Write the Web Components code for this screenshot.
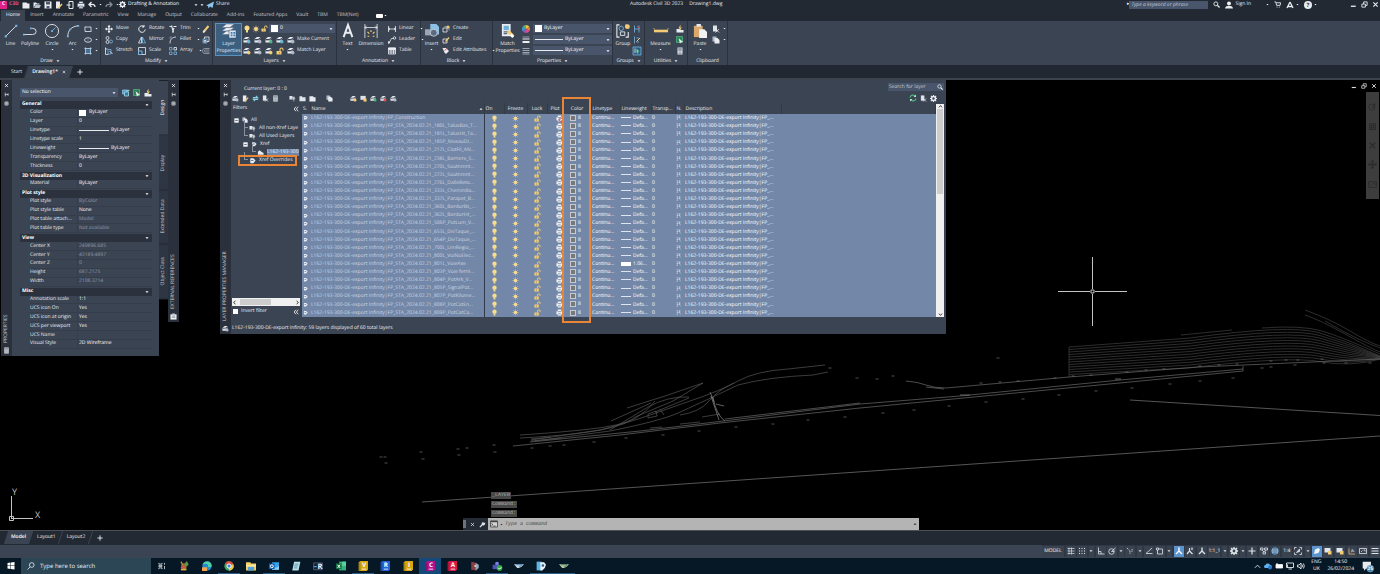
<!DOCTYPE html>
<html lang="en">
<head>
<meta charset="utf-8">
<title>Autodesk Civil 3D 2023 - Drawing1.dwg</title>
<style>
  :root {
    --dark: #222933;
    --panel: #3b4453;
    --field: #48556a;
    --line: #2b323e;
    --text: #eceef2;
    --accent: #ea8536;
  }

  html, body {
    height: 100%;
    margin: 0;
  }

  body {
    display: flex;
    flex-direction: column;
    overflow: hidden;
    color: var(--text);
    background: #000;
    font: 5px/7px "Open Sans", "Noto Sans", sans-serif;
    text-rendering: geometricPrecision;
  }

  drawing-area {
    flex: 1;
  }
</style>
</head>
<body>
<title-bar></title-bar>
<ribbon-tabs></ribbon-tabs>
<ribbon-bar></ribbon-bar>
<doc-tabs></doc-tabs>
<drawing-area>
  <properties-palette></properties-palette>
  <references-palette></references-palette>
  <layer-manager></layer-manager>
  <command-line></command-line>
</drawing-area>
<layout-tabs></layout-tabs>
<status-bar></status-bar>
<task-bar></task-bar>

<script>
'use strict';

// rules that every shadow root needs
const base = `
  :host, *, *::before, *::after { box-sizing: border-box; }
  button, input, select {
    margin: 0; padding: 0; border: 0; border-radius: 0;
    font: inherit; color: inherit; background: none; text-align: inherit;
    text-rendering: inherit; outline: none;
  }
  select { appearance: none; min-width: 0; }
  button { display: inline-flex; align-items: center; justify-content: center; white-space: nowrap; }
  a { color: inherit; text-decoration: none; }
`;

function render(element, css, html) {
  const template = document.createElement('template');
  template.innerHTML = `<style>${base}${css}</style>${html}`;
  element.attachShadow({ mode: 'open' });
  element.shadowRoot.appendChild(template.content.cloneNode(true));
}

const W = '#e8ebf0';
const Y = '#f3cb72';
const G = '#4fb57e';

// a stack of small layer sheets with a badge in the lower right corner
const sheets = (badge) => `
  <path d="M1 6 6 2h7L8 6z M1 9l5-1h6l2 1-5 4H1z" fill="${W}" stroke="none"/>
  <path d="M1 7v2h7l5-4" stroke="#9aa5b5"/><circle cx="11.5" cy="11.5" r="3.5" fill="${badge}" stroke="none"/>`;

// square product tile of the Autodesk family
const product = (letter, color) => `
  <path d="M1 2 4 0h12v13l-2 3H1z" fill="${color}" stroke="none"/><path d="M1 2l3 1v13H1z" fill="#0003" stroke="none"/>
  <text x="9.5" y="10" text-anchor="middle" font-size="10" font-weight="700" fill="#fff" stroke="none">${letter}</text>
  <path d="M6 13h7" stroke="#fff" stroke-width="1.3"/>`;

const icons = {
  caret: '<path d="M2 5h12l-6 7z" fill="currentColor" stroke="none"/>',
  close: '<path d="M3 3l10 10M13 3 3 13" stroke-width="2.4"/>',
  minimize: '<path d="M2 12h11" stroke-width="3"/>',
  restore: '<path d="M2 7h8v7H2zM6 7V2h8v8h-4" stroke-width="2"/>',
  plus: '<path d="M8 1v14M1 8h14" stroke-width="2.4"/>',
  pin: '<path d="M4 2v12M4 8h9M13 4v8" stroke-width="2"/>',
  menu: '<path d="M3 3h10v10H3z M6 6h4v4H6z" stroke-width="2"/>',
  file: `<path d="M1 3h8l2 2h4v10H1z" fill="${W}" stroke="none"/>`,
  open: `<path d="M1 14V3h5l2 2h5v2H5z" fill="${W}" stroke="none"/><path d="M5 8h11l-3 6H2z" fill="#b9c1cd" stroke="none"/>`,
  save: `<path d="M1 1h14v14H1z" fill="${W}" stroke="none"/><path d="M4 2h8v5H4zM5 10h6v5H5z" fill="#4a5567" stroke="none"/>`,
  saveas: `<path d="M2 1h8v14H2z" fill="${W}" stroke="none"/><path d="M7 14l7-8" stroke="${Y}" stroke-width="3"/>`,
  phone: '<path d="M6 1h8v14H6z" stroke-width="2"/><path d="M1 8h8" stroke-width="2"/>',
  print: `<path d="M4 1h8v4H4z M1 5h14v7H1z M4 10h8v5H4z" fill="${W}" stroke="#4a5567" stroke-width="1"/>`,
  undo: '<path d="M14 12c0-5-4-6-11-5M7 2 2 7l5 5" stroke-width="2.5"/>',
  redo: '<path d="M2 12c0-5 4-6 11-5M9 2l5 5-5 5" stroke-width="2.5"/>',
  gear: '<circle cx="8" cy="8" r="4.5" stroke-width="3.4"/><path d="M8 0v3M8 13v3M0 8h3M13 8h3M2 2l2 2M12 12l2 2M14 2l-2 2M4 12l-2 2" stroke-width="2.6"/>',
  send: '<path d="M0 9 16 1l-3 13-5-3-3 4-1-5z" fill="#8cc6ef" stroke="none"/>',
  search: '<circle cx="6.5" cy="6.5" r="4.5" stroke-width="2"/><path d="M10 10l5 5" stroke-width="3"/>',
  find: '<circle cx="9.5" cy="6" r="4.7"/><path d="M6 10l-5 5"/>',
  person: '<circle cx="8" cy="5" r="4" fill="currentColor" stroke="none"/><path d="M0 15c1-5 4-5 8-5s7 0 8 5z" fill="currentColor" stroke="none"/>',
  cart: '<path d="M1 2h3l2 8h8l1-6H5M6 14h2M11 14h2" stroke-width="2"/>',
  app: '<path d="M8 2 2 14M8 2l6 12M4 11h8" stroke-width="2.6"/>',
  help: '<circle cx="8" cy="8" r="8" fill="#e8ebf0" stroke="none"/><text x="8" y="12" text-anchor="middle" font-size="12" font-weight="700" fill="#222933" stroke="none">?</text>',
  line: '<path d="M2 14 14 2" stroke-width="1"/><path d="M1 13h2v2H1zM13 1h2v2h-2z" stroke="#78b4e0" fill="#78b4e0" stroke-width=".5"/>',
  polyline: '<path d="M1 12h10a4 3.5 0 0 0 0-7h-1" stroke-width="1"/><path d="M0 11h2v2H0zM8 4h2v2H8z" fill="#78b4e0" stroke="none"/>',
  circle: '<circle cx="8" cy="8" r="7.5" stroke-width="1"/><path d="M8 8l4-4" stroke="#78b4e0" stroke-width="1"/><path d="M7 7h2v2H7z" fill="#78b4e0" stroke="none"/>',
  arc: '<path d="M2 15C2 7 6 3 14 2" stroke-width="1"/><path d="M1 13h2v2H1zM4 5h2v2H4zM13 1h2v2h-2z" fill="#78b4e0" stroke="none"/>',
  rect: '<path d="M2 4h12v9H2z"/><path d="M1 3h2v2H1zM13 12h2v2h-2z" fill="#78b4e0" stroke="none"/>',
  ellipse: '<ellipse cx="8" cy="8" rx="7" ry="4.5"/><path d="M7 7h2v2H7z" fill="#78b4e0" stroke="none"/>',
  hatch: '<path d="M3 3h10v10H3z" fill="#4a6f92" stroke="#78b4e0"/><path d="M0 3h16M0 13h16M3 0v16M13 0v16" stroke-width=".8"/>',
  move: '<path d="M8 1v14M1 8h14" stroke-width="2.4"/><path d="M5 4l3-4 3 4zM5 12l3 4 3-4zM4 5 0 8l4 3zM12 5l4 3-4 3z" fill="currentColor" stroke="none"/>',
  copy: '<circle cx="5" cy="4" r="3"/><circle cx="5" cy="12" r="3"/><circle cx="12" cy="11" r="3" stroke="#78b4e0"/>',
  stretch: '<path d="M1 1v14h6M1 4h4"/><path d="M6 5h6v9H6z" stroke="#78b4e0"/><path d="M9 8l6 6"/>',
  rotate: '<path d="M12 3a6.5 6.5 0 1 0 2.5 6M12 0v4H8" stroke-width="2"/>',
  mirror: '<path d="M7 2v12H1z"/><path d="M9 2v12h6z" stroke="#78b4e0"/>',
  scale: '<path d="M1 1h14v14H1z"/><path d="M1 8h7v7H1z" stroke="#78b4e0" stroke-width="2"/>',
  trim: '<path d="M1 3h4M9 3h6" stroke-width="2"/><path d="M5 1l4 14M10 6l-3 9" stroke-width="2.2"/>',
  fillet: '<path d="M2 15C2 7 5 3 14 2"/><path d="M2 2h5M2 2v5" stroke="#78b4e0" stroke-dasharray="1.5 1"/>',
  array: '<path d="M1 1h5v5H1zM10 10h5v5h-5zM1 10h5v5H1z" stroke="#78b4e0"/><path d="M10 1h5v5h-5z"/>',
  erase: '<path d="M3 14 13 2" stroke="#f3cb72" stroke-width="4"/><path d="M2 15l4-4" stroke="#e8ebf0" stroke-width="3"/>',
  explode: '<path d="M2 6h8v8H2z" stroke="#78b4e0"/><path d="M5 6V2h9v9h-4M4 9h4v3H4z"/>',
  offset: '<path d="M15 3H6a5 5 0 0 0 0 10h9M15 6H7a2 2 0 0 0 0 4h8" stroke="#9aa5b5"/>',
  layers: '<path d="M0 4 5 0h9L9 4zM0 8l5-4h9L9 8zM0 12l5-4h9l-5 4z" fill="#e8ebf0" stroke="#5b6a80" stroke-width=".6"/><path d="M8 7h8v9H8z" fill="#dfe5ee" stroke="#30506f" stroke-width=".6"/><path d="M10 9h2v2h-2zM10 12h2v2h-2zM13 9h2v2h-2zM13 12h2v2h-2z" fill="#3f77a8" stroke="none"/>',
  bulb: '<circle cx="8" cy="6" r="5" fill="#f8dc8f" stroke="none"/><path d="M6 10h4v5H6z" fill="#f8dc8f" stroke="none"/>',
  sun: '<circle cx="8" cy="8" r="3.8" fill="#f8dc8f" stroke="none"/><path d="M8 1v14M1 8h14M3 3l10 10M13 3 3 13" stroke="#f8dc8f" stroke-width="1"/>',
  unlock: '<path d="M1 8h10v7H1z" fill="#f3cb72" stroke="none"/><path d="M8 8V5a3 3 0 0 1 6 0v2" stroke="#f3cb72" stroke-width="2.2"/><path d="M6 10h1v3H6z" fill="#4a5567" stroke="none"/>',
  plot: '<path d="M4 1h8v4h3v7h-3v3H4v-3H1V5h3z" fill="#eef1f6" stroke="none"/><path d="M4 6h8M5 11h6" stroke="#53657f" stroke-width="1.4"/>',
  noplot: '<path d="M4 1h8v4h3v7h-3v3H4v-3H1V5h3z" fill="#eef1f6" stroke="none"/><path d="M4 6h8M5 11h6" stroke="#53657f" stroke-width="1.4"/><circle cx="11" cy="11" r="4" stroke="#e0455a" stroke-width="2"/>',
  sheetBlue: sheets('#5fb6cf'),
  sheetGreen: sheets(G),
  sheetYellow: sheets(Y),
  sheetRed: sheets('#d8505a'),
  sheetGray: sheets('#aeb8c6'),
  text: '<path d="M3 15 8 1l5 14M5 10h6" stroke-width="2.2"/>',
  dimension: '<path d="M1 0v16M15 0v16M1 4h14M3 2 1 4l2 2M13 2l2 2-2 2" stroke-width=".9"/><path d="M8 7v2M4 9l2 2M12 9l-2 2M4 14h2M12 14h-2" stroke="#f3cb72" stroke-width="1.4"/>',
  linear: '<path d="M1 2v12M15 2v12M1 8h14M4 6 1 8l3 2M12 6l3 2-3 2"/>',
  leader: '<path d="M2 14 7 5h4"/><circle cx="13" cy="4" r="2.5"/><path d="M1 15v-4l3 2z" fill="currentColor"/>',
  table: '<path d="M1 2h14v12H1z" fill="#4a5567"/><path d="M1 6h14M1 10h14M6 6v8M11 6v8"/><path d="M1 2h14v3H1z" fill="currentColor"/>',
  insert: '<path d="M6 0h7l3 3v9H6z" fill="#8cc0e6" stroke="none"/><path d="M0 6h8v7H0z" fill="#9aa5b5" stroke="none"/><circle cx="10" cy="10" r="4" fill="#5b6a80" stroke="#c9d0da" stroke-width="1"/>',
  quickSelect: '<path d="M1 2h9v8H1z" fill="#4f9bd0" stroke="#8cc0e6"/><path d="M5 6h8v8H5z" fill="#2e7d9c" stroke="#a5d5e8"/><path d="M12 1v5M9 3h6" stroke="#8fe0c0" stroke-width="1.6"/>',
  block: '<path d="M2 6h8v8H2z"/><path d="M5 3h9v8" stroke="#9aa5b5"/><circle cx="12" cy="4" r="3" fill="#f3cb72" stroke="none"/>',
  editBlock: '<path d="M2 6h8v8H2z"/><path d="M7 11l7-8" stroke="#f3cb72" stroke-width="2.5"/>',
  attributes: '<path d="M1 2h7l6 6-6 6-3-3z" fill="#e8ebf0" stroke="none"/><path d="M5 7l6-5" stroke="#d8505a" stroke-width="2"/>',
  match: '<path d="M1 0h10v14H1z" fill="#e8ebf0" stroke="none"/><path d="M3 2h6v5H3z" fill="#6fb0dd" stroke="none"/><path d="M3 9h5M3 11h4" stroke="#59677b"/><path d="M8 8l6 6" stroke="#f3cb72" stroke-width="3.5"/><path d="M11 12l3 3" stroke="#fff" stroke-width="3"/>',
  wheel: '<path d="M8 8V0a8 8 0 0 1 7 4z" fill="#f0c443" stroke="none"/><path d="M8 8l7-4a8 8 0 0 1 0 8z" fill="#ef7a3c" stroke="none"/><path d="M8 8l7 4a8 8 0 0 1-7 4z" fill="#d94b8b" stroke="none"/><path d="M8 8v8a8 8 0 0 1-7-4z" fill="#6f62c9" stroke="none"/><path d="M8 8l-7 4a8 8 0 0 1 0-8z" fill="#3f9bdc" stroke="none"/><path d="M8 8 1 4a8 8 0 0 1 7-4z" fill="#4fb57e" stroke="none"/>',
  weights: '<path d="M1 2h14" stroke-width="1"/><path d="M1 6h14" stroke-width="2"/><path d="M1 12h14" stroke-width="4"/>',
  types: '<path d="M1 3h14M1 7h14M1 11h14M1 14h14" stroke="#9aa5b5" stroke-width="2"/>',
  group: '<path d="M4 1H1v14h3M11 1h1M11 15h3V9" stroke-width="1.2"/><circle cx="6" cy="5" r="2.5" stroke="#78b4e0" stroke-width="1"/><path d="M5 9h5v4H5z" stroke-width="1"/><circle cx="13" cy="3" r="2.8" fill="#f3cb72" stroke="none"/>',
  ungroup: '<path d="M3 1v14M12 1v14M3 8h9" stroke="#78b4e0"/><path d="M8 2l6 6" stroke="#d8505a" stroke-width="2"/>',
  groupEdit: '<path d="M3 1v14M7 4h5M7 12h5" stroke="#78b4e0"/><path d="M7 11l7-7" stroke="#f3cb72" stroke-width="2"/>',
  groupSelect: '<path d="M0 0h16v16H0z" fill="#2f5a80" stroke="#78b4e0"/><path d="M4 3v9" stroke="#e8ebf0"/><path d="M7 3l6 6-3 .5 1 3-2 1-1-3-1 1z" fill="#6fd59c" stroke="none"/>',
  measure: '<path d="M0 8h16" stroke="#f3cb72" stroke-width="3"/><path d="M0 5v1M16 5v1" stroke="#f3cb72"/>',
  quick: '<path d="M1 8h8v7H1zM9 10h6v5H9z" fill="#e8ebf0" stroke="none"/><path d="M8 1 5 7h3l-1 4 5-6H8l2-4z" fill="#f3cb72" stroke="none"/>',
  select: '<path d="M1 1h12v12H1z" fill="#2e7d55" stroke="#4fb57e"/><path d="M5 4l9 8-4 .5-2 3z" fill="#e8ebf0" stroke="none"/>',
  calc: '<path d="M3 1h10v14H3z" fill="#dfe3ea" stroke="none"/><path d="M5 3h6v2H5zM5 7h6M5 10h6M5 13h6" stroke="#4a5567" stroke-width="1"/>',
  paste: '<path d="M1 2h10v13H1z" fill="#d9a86a" stroke="none"/><path d="M4 0h5v3H4z" fill="#e8ebf0" stroke="none"/><path d="M7 6h6l3 3v7H7z" fill="#f1f1f1" stroke="none"/>',
  references: '<path d="M1 3h14v12H1z" fill="#f1f1f1" stroke="none"/><path d="M5 1h6v3H5z" fill="#c3c9d2" stroke="none"/><path d="M4 7h8M4 10h8" stroke="#7b8797"/>',
  cut: '<path d="M2 1h8v12H2z" fill="#dfe3ea" stroke="none"/><path d="M7 8l7 7M14 8l-7 7" stroke-width="1.6"/>',
  copyClip: '<path d="M1 1h8v10H1z" fill="#aeb8c6" stroke="none"/><path d="M5 4h6l4 4v7H5z" fill="#e8ebf0" stroke="none"/>',
  folder: '<path d="M1 3h6l1 2h7v9H1z" fill="#dfe3ea" stroke="none"/>',
  filter: '<path d="M1 2h6l1 2h5v6H1z" fill="#dfe3ea" stroke="none"/><path d="M7 7h8l-3 4v4h-2v-4z" fill="#f6f7f9" stroke="#3b4453" stroke-width="1"/>',
  refresh: '<path d="M2 7a6 6 0 0 1 11-2M14 9a6 6 0 0 1-11 2" stroke="#4fb57e" stroke-width="2.6"/><path d="M14 1v5H9zM2 15v-5h5z" fill="#b8e6cb" stroke="none"/>',
  swap: '<path d="M2 6h11L9 2M14 10H3l4 4" stroke="#8cd0e6" stroke-width="2.4"/>',
  status: '<path d="M3 3h7l5 5-5 6H3z" fill="#e6edf6" stroke="none"/><path d="M5 8h5" stroke="#53657f" stroke-width="2"/>',
  minus: '<path d="M1 1h14v14H1z" fill="#f1f3f6" stroke="none"/><path d="M4 8h8" stroke="#222933" stroke-width="2"/>',
  chevrons: '<path d="M8 2 3 8l5 6M14 2 9 8l5 6" stroke-width="2.4"/>',
  freezeNew: '<path d="M2 2h4M9 2h5M4 2v12M2 14h4M9 5h5M10 2l4 12M3 8h10" stroke="#dfe5ee" stroke-width="1.4"/>',
  sort: '<path d="M2 11h12L8 4z" fill="currentColor" stroke="none"/>',
  up: '<path d="M3 11l5-6 5 6" stroke-width="3"/>',
  down: '<path d="M3 5l5 6 5-6" stroke-width="3"/>',
  left: '<path d="M11 3 5 8l6 5" stroke-width="3"/>',
  right: '<path d="M5 3l6 5-6 5" stroke-width="3"/>',
  chevron: '<path d="M2 11l6-6 6 6" stroke-width="1.8"/>',
  wrench: '<path d="M2 14 9 7" stroke-width="3"/><path d="M14 3l-3 2-1-3a4 4 0 1 0 4 4z" fill="currentColor" stroke="none"/>',
  prompt: '<path d="M1 2h14v12H1z" stroke="#444" fill="#d5d5d5"/><path d="M1 3h14" stroke="#444" stroke-width="3"/><path d="M3 7l3 2-3 2M7 12h4" stroke="#333"/>',
  grid: '<path d="M1 3h14M1 8h14M1 13h14M4 1v14M9 1v14" stroke-width="1.3"/>',
  dots: '<path d="M2 3h13M2 8h13M2 13h13" stroke-dasharray="2 3" stroke-width="2"/>',
  ortho: '<path d="M3 1v13h12M3 9h5v5"/>',
  polar: '<circle cx="7" cy="9" r="5.5"/><path d="M7 9l8-7M7 9h5"/>',
  iso: '<path d="M2 2l5 5M8 8v6M12 4v6" stroke-dasharray="3 1.5"/>',
  angle: '<path d="M14 2 2 13h13"/>',
  osnap: '<path d="M3 4h10v10H3z"/><path d="M1 2h4v4H1z" fill="#3b4453"/>',
  scaleA: '<path d="M8 1v7l-6 6M8 8l6 6" stroke-width="2.8"/>',
  scaleB: '<path d="M7 2v6l-5 6M7 8l6 6M12 1v5" stroke-width="2.4"/>',
  nodes: '<path d="M1 2h5v4H1zM9 2h6v4H9zM6 10h5v4H6zM4 6l4 4M12 6l-3 4"/>',
  globe: '<circle cx="8" cy="8" r="6.5" fill="#33638e" stroke="#78b4e0"/><path d="M2 6h12M2 10h12"/>',
  isolate: '<path d="M1 5V1h4M11 1h4v4M15 11v4h-4M5 15H1v-4"/><path d="M5 11l6-7v5z" fill="currentColor"/>',
  tag: '<path d="M2 14 4 5l7-3 3 3-3 7z" fill="#f1f6fb" stroke="none"/>',
  sheetWarn: '<path d="M1 2h12v9H1z" fill="#dfe3ea" stroke="none"/><path d="M8 8h7v7H8z" fill="#f3cb72" stroke="none"/>',
  trim3: '<path d="M2 3v11h12" stroke="#c99a6b" stroke-width="2"/><path d="M5 11l3-8 6 6z" fill="#8d96a3" stroke="none"/>',
  screen: '<path d="M1 3h14v10H1z"/><path d="M4 10l3-3M9 6h3v3"/>',
  burger: '<path d="M1 3h14M1 8h14M1 13h14" stroke-width="2"/>',
  windows: '<path d="M1 2l6-1v6H1zM8 1l7-1v7H8zM1 8h6v6l-6-1zM8 8h7v7l-7-1z" fill="#fff" stroke="none"/>',
  taskview: '<path d="M3 3v2h5V3M3 13v-2h5v2M3 7h5v2H3zM12 3v3M12 8v5" stroke-width="1.1"/>',
  deer: '<circle cx="8" cy="8" r="4.5" fill="#a8683a" stroke="none"/><path d="M3 1l3 5M13 1l-3 5" stroke="#c9903f" stroke-width="2"/><circle cx="12" cy="5" r="3" fill="#4f9a44" stroke="none"/><path d="M3 12h9v3H3z" fill="#e0b34a" stroke="none"/><circle cx="5" cy="10" r="2" fill="#d8505a" stroke="none"/>',
  edge: '<circle cx="8" cy="8" r="7.5" fill="#1f8ad0" stroke="none"/><path d="M1 6a7.5 7.5 0 0 1 14.5 1c0 4-5 3-6 2 2-5-5-6-8.5-3z" fill="#4fd0a5" stroke="none"/><path d="M0 10h8v6H0z" fill="#f0a34a" stroke="none"/>',
  chrome: '<circle cx="8" cy="8" r="7.5" fill="#3fa55a" stroke="none"/><path d="M8 8 1.5 4A7.5 7.5 0 0 1 15 5z" fill="#e0493c" stroke="none"/><path d="M8 8l7-3a7.5 7.5 0 0 1-7 10.5z" fill="#f4c53f" stroke="none"/><circle cx="8" cy="8" r="3.4" fill="#3f83e8" stroke="#fff"/>',
  explorer: '<path d="M0 2h7l1 2h8v11H0z" fill="#f5cf63" stroke="none"/><path d="M3 9h10v6H3z" fill="#4fa3df" stroke="none"/><path d="M0 6h16v3H0z" fill="#fbe6a0" stroke="none"/>',
  outlook: '<path d="M5 2h11v12H5z" fill="#3aa0e8" stroke="none"/><path d="M5 8l6 3 5-3v6H5z" fill="#8fd0f7" stroke="none"/><path d="M0 4h9v9H0z" fill="#0f5fb0" stroke="none"/><circle cx="4.5" cy="8.5" r="2.3" stroke="#fff"/>',
  notepad: '<path d="M5 1h10l-3 14H2z" fill="#b9dfe9" stroke="none"/><path d="M6 5h6M5 8h6M5 11h5" stroke="#5f9db0"/>',
  rtool: '<path d="M1 3h14v11H1z" fill="#1a2233" stroke="#47536a"/><text x="11" y="13" text-anchor="middle" font-size="12" font-weight="700" fill="#fff" stroke="none">R</text><path d="M1 9h5" stroke="#5a8fdc" stroke-width="2"/>',
  excel: '<path d="M5 1h11v14H5z" fill="#35b27a" stroke="none"/><path d="M10 1h6v7h-6z" fill="#5ad39a" stroke="none"/><path d="M0 4h9v9H0z" fill="#14703f" stroke="none"/><path d="M2.5 6l4 5M6.5 6l-4 5" stroke="#fff"/>',
  vault: product('V', '#d8a70f'),
  revit: product('R', '#2262d8'),
  inventor: product('I', '#d8a70f'),
  civil: product('C', '#b3128f'),
  acad: product('A', '#d81b46'),
  nav: '<path d="M2 1l9 2v12l-9-1z" fill="#8a3e42" stroke="none"/><path d="M9 3l5 3v5l-5 4z" fill="#8fa8b8" stroke="none"/><path d="M7 8h3" stroke="#fff" stroke-width="2"/>',
  teams: '<circle cx="8" cy="4" r="3" fill="#7b83eb" stroke="none"/><path d="M1 6h11v7H1z" fill="#4b53bc" stroke="none"/><circle cx="12" cy="11" r="4.5" fill="#2fae3c" stroke="none"/><path d="M10 11l2 2 3-3" stroke="#fff"/>',
  bird: '<path d="M0 5h16l-4 4-4 2H5z" fill="#c9d6e0" stroke="none"/><path d="M3 6h10l-5 4" stroke="#4a8ac0" stroke-width="1.6"/>',
  sap: '<path d="M1 1h8v14H1z" fill="#5fb4e8" stroke="none"/><path d="M7 2h6l3 4-2 5-4 4H7z" fill="#e8f2f8" stroke="none"/><circle cx="11" cy="7" r="2" fill="#2c5a78" stroke="none"/>',
  birdGreen: '<path d="M0 5h16l-4 4-4 2H5z" fill="#b6c9a0" stroke="none"/><path d="M3 6h10l-5 4" stroke="#4f7f70" stroke-width="1.6"/>',
  cloud: '<path d="M3 12a3 3 0 0 1 0-6 5 5 0 0 1 9 0 3 3 0 0 1 1 6z" fill="#5fb4f0" stroke="none"/><circle cx="12" cy="11" r="4" fill="#2a7bd0" stroke="none"/>',
  xrefFile: '<path d="M2 13V6l4-3 4 3 5 3v4z" fill="#e8ebf0" stroke="none"/>',
  battery: '<path d="M2 5h13v7H2z" fill="#fff"/><path d="M4 2v3" stroke-width="2"/>',
  monitor: '<path d="M1 2h14v9H1zM5 14h7M3 5v6"/>',
  volume: '<path d="M1 6h3l4-4v12L4 10H1z"/><path d="M10 5q2 3 0 6M13 3q3 5 0 10"/>',
  notify: '<path d="M1 1h12v10H6l-3 3v-3H1z" fill="#e8ebf0" stroke="none"/><circle cx="12" cy="11" r="5" fill="#3d7fa8" stroke="#9cc3dc" stroke-width=".7"/><text x="12" y="13.5" text-anchor="middle" font-size="7" font-weight="700" fill="#fff" stroke="none">25</text>'
};

class CadIcon extends HTMLElement {
  constructor() {
    super();
    const size = this.getAttribute('size') || 8;
    render(this, `
      :host { display: inline-flex; flex: none; width: ${size}px; height: ${size}px; }
      svg { width: 100%; height: 100%; fill: none; stroke: currentColor; stroke-width: 1.6; overflow: visible; }
    `, `<svg viewBox="0 0 16 16" aria-hidden="true">${icons[this.getAttribute('name')]}</svg>`);
  }
}

const icon = (name, size = 8) => `<cad-icon name="${name}" size="${size}"></cad-icon>`;
const caret = icon('caret', 4);

class TitleBar extends HTMLElement {
  constructor() {
    super();
    render(this, `
      :host { display: grid; grid-template-columns: 630px 1fr auto; align-items: center; height: 10px; padding-bottom: 1px; background: var(--dark); }
      div { display: flex; align-items: center; }
      .logo { width: 7px; height: 8px; background: #e0218a; color: #fff; font-weight: 700; justify-content: center; }
      .c3d { width: 15px; padding-left: 2px; color: #e0559f; font-weight: 700; }
      .quick { gap: 3px; }
      .work { gap: 2px; }
      select { width: 64px; color: #fff; }
      .share { margin-left: 2px; gap: 2px; }
      input { width: 79px; height: 8px; padding: 0 2px; background: var(--field); }
      input::placeholder { color: #c4cbd6; font-style: italic; opacity: 1; }
      .name { gap: 6px; }
      .account { gap: 5px; padding-right: 1px; }
      .account button { gap: 2px; }
      .dim { opacity: .5; }
      .system { gap: 4px; padding-left: 28px; }
    `, `
      <div>
        <div class="logo">C</div><span class="c3d">C3D</span>
        <div class="quick">
          ${['file', 'open', 'save', 'saveas', 'phone', 'print', 'undo'].map((n) => `<button aria-label="${n}">${icon(n)}</button>`).join('')}
          ${icon('caret', 3)}<button class="dim" aria-label="redo">${icon('redo')}</button>${icon('caret', 3)}
        </div>
        <div class="work">${icon('gear', 7)}<select aria-label="Workspace"><option>Drafting &amp; Annotation</option></select>${caret}</div>
        <button class="share">${caret}${icon('send')}Share</button>
      </div>
      <div class="name"><span>Autodesk Civil 3D 2023</span><span>Drawing1.dwg</span></div>
      <div class="account">
        <div>▸<input aria-label="Search" placeholder="Type a keyword or phrase"></div>
        <button aria-label="Find">${icon('search', 7)}</button>
        <button>${icon('person')}Sign In</button>
        <span></span><span></span>${icon('caret', 3)}
        <button aria-label="Store">${icon('cart', 7)}</button>
        <button aria-label="Apps">${icon('app')}${icon('caret', 3)}</button>
        <button aria-label="Help">${icon('help')}${icon('caret', 3)}</button>
        <div class="system">
          <button aria-label="Minimize">${icon('minimize', 7)}</button>
          <button aria-label="Restore">${icon('restore', 7)}</button>
          <button aria-label="Close">${icon('close', 7)}</button>
        </div>
      </div>
    `);
  }
}

class RibbonTabs extends HTMLElement {
  constructor() {
    super();
    const tabs = ['Home', 'Insert', 'Annotate', 'Parametric', 'View', 'Manage', 'Output', 'Collaborate',
      'Add-ins', 'Featured Apps', 'Vault', 'TBM', 'TBM(Net)'];
    render(this, `
      :host { display: flex; align-items: stretch; height: 11px; background: var(--dark); color: #c3c9d3; }
      nav { display: flex; padding-left: 1px; }
      a { padding: 2px 4px 0; white-space: nowrap; }
      a + a { margin-left: 1px; }
      .active { padding: 2px 5px 0; color: #fff; background: var(--panel); }
      button { gap: 1px; margin-left: 14px; color: #fff; }
      i { width: 7px; height: 4px; background: #fff; border-radius: 1px; }
    `, `
      <nav>${tabs.map((t, i) => `<a href="#"${i ? '' : ' class="active"'}>${t}</a>`).join('')}</nav>
      <button aria-label="Ribbon display"><i></i>${icon('caret', 3)}</button>
    `);
  }
}

// One titled group of tools
class RibbonPanel extends HTMLElement {
  constructor() {
    super();
    render(this, `
      :host { display: flex; flex-direction: column; width: ${this.getAttribute('width')}px; padding-top: 2px; border-right: 1px solid var(--line); }
      .tools { display: flex; height: 33px; padding-left: 2px; }
      footer { display: flex; justify-content: center; align-items: center; gap: 3px; height: 9px; padding-top: 1px; white-space: nowrap; }
    `, `
      <div class="tools"><slot></slot></div>
      <footer>${this.getAttribute('label')}${this.hasAttribute('plain') ? '' : icon('caret', 4)}</footer>
    `);
  }
}

// Big button: picture on top, one or two words below
class RibbonTool extends HTMLElement {
  constructor() {
    super();
    const words = this.getAttribute('label').split(' ');
    const drop = this.hasAttribute('drop') ? icon('caret', 3) : '';
    render(this, `
      :host { display: block; width: ${this.getAttribute('width')}px; }
      button { flex-direction: column; justify-content: flex-start; width: 100%; height: 100%; padding-top: 1px; }
      cad-icon:first-child { margin-bottom: 3px; }
      :host([active]) button { background: #3c5f80; box-shadow: inset 0 0 0 1px #5a93c2; }
    `, `<button>${icon(this.getAttribute('icon'), 14)}${words.map((w) => `<span>${w}</span>`).join('')}${drop}</button>`);
  }
}

// Column of small buttons. Entries look like "icon|Label|v", separated by commas
class RibbonColumn extends HTMLElement {
  constructor() {
    super();
    const rows = this.getAttribute('items').split(',').map((item) => {
      const [name, label, drop] = item.split('|');
      return `<button aria-label="${label || name}">${icon(name)}${label ? `<span>${label}</span>` : ''}${drop ? icon('caret', 3) : ''}</button>`;
    });
    render(this, `
      :host { display: grid; grid-auto-rows: 11px; width: ${this.getAttribute('width')}px; padding-left: 2px; }
      button { gap: 3px; justify-content: flex-start; }
      span + cad-icon { margin-left: 3px; }
    `, rows.join(''));
  }
}

// Drop-down with an optional colour square or line sample
class SampleSelect extends HTMLElement {
  constructor() {
    super();
    const kind = this.getAttribute('sample');
    render(this, `
      :host { display: flex; align-items: center; gap: 2px; height: 9px; padding: 0 2px; background: var(--field); color: #fff; min-width: 0; }
      .square { flex: none; width: 7px; height: 7px; background: #fff; }
      .line { flex: none; width: 28px; height: 1px; background: #e8ebf0; }
      select { flex: 1; height: 100%; }
    `, `
      ${kind ? `<span class="${kind}"></span>` : ''}
      <select aria-label="${this.getAttribute('label')}"><option>${this.getAttribute('value')}</option></select>${caret}
    `);
  }
}

class RibbonBar extends HTMLElement {
  constructor() {
    super();
    render(this, `
      :host { display: flex; height: 44px; background: var(--panel); }
      .state, .props { display: grid; grid-auto-rows: 11px; align-items: center; }
      .state { width: 93px; padding-left: 1px; }
      .state > div { display: flex; align-items: center; gap: 1px; }
      .state > div + div { gap: 3px; }
      .state sample-select { flex: 1; }
      .state button { gap: 2px; }
      .props { grid-template-columns: 9px 79px; column-gap: 2px; margin-left: 2px; }
    `, `
      <ribbon-panel label="Draw" width="101">
        <ribbon-tool icon="line" label="Line" width="17"></ribbon-tool>
        <ribbon-tool icon="polyline" label="Polyline" width="22"></ribbon-tool>
        <ribbon-tool icon="circle" label="Circle" width="22" drop></ribbon-tool>
        <ribbon-tool icon="arc" label="Arc" width="19" drop></ribbon-tool>
        <ribbon-column items="rect||v,ellipse||v,hatch||v" width="18"></ribbon-column>
      </ribbon-panel>
      <ribbon-panel label="Modify" width="112">
        <ribbon-column items="move|Move,copy|Copy,stretch|Stretch" width="33"></ribbon-column>
        <ribbon-column items="rotate|Rotate,mirror|Mirror,scale|Scale" width="31"></ribbon-column>
        <ribbon-column items="trim|Trim|v,fillet|Fillet|v,array|Array|v" width="33"></ribbon-column>
        <ribbon-column items="erase,explode,offset" width="12"></ribbon-column>
      </ribbon-panel>
      <ribbon-panel label="Layers" width="124">
        <ribbon-tool icon="layers" label="Layer Properties" width="27" active></ribbon-tool>
        <div class="state">
          <div>${icon('bulb')}${icon('sun')}${icon('unlock', 7)}<sample-select sample="square" label="Layer" value="0"></sample-select></div>
          <div>${icon('sheetBlue')}${icon('sheetGray')}${icon('sheetGreen')}${icon('sheetBlue')}<button>${icon('sheetGray')}Make Current</button></div>
          <div>${icon('sheetYellow')}${icon('sheetGray')}${icon('sheetYellow')}${icon('unlock')}<button>${icon('sheetGray')}Match Layer</button></div>
        </div>
      </ribbon-panel>
      <ribbon-panel label="Annotation" width="84">
        <ribbon-tool icon="text" label="Text" width="17" drop></ribbon-tool>
        <ribbon-tool icon="dimension" label="Dimension" width="30"></ribbon-tool>
        <ribbon-column items="linear|Linear|v,leader|Leader|v,table|Table" width="34"></ribbon-column>
      </ribbon-panel>
      <ribbon-panel label="Block" width="72">
        <ribbon-tool icon="insert" label="Insert" width="17" drop></ribbon-tool>
        <ribbon-column items="block|Create,editBlock|Edit,attributes|Edit Attributes|v" width="50"></ribbon-column>
      </ribbon-panel>
      <ribbon-panel label="Properties" width="120">
        <ribbon-tool icon="match" label="Match Properties" width="26"></ribbon-tool>
        <div class="props">
          ${icon('wheel')}<sample-select sample="square" label="Object color" value="ByLayer"></sample-select>
          ${icon('weights')}<sample-select sample="line" label="Lineweight" value="ByLayer"></sample-select>
          ${icon('types')}<sample-select sample="line" label="Linetype" value="ByLayer"></sample-select>
        </div>
      </ribbon-panel>
      <ribbon-panel label="Groups" width="32">
        <ribbon-tool icon="group" label="Group" width="16"></ribbon-tool>
        <ribbon-column items="ungroup,groupEdit,groupSelect" width="12"></ribbon-column>
      </ribbon-panel>
      <ribbon-panel label="Utilities" width="43">
        <ribbon-tool icon="measure" label="Measure" width="27" drop></ribbon-tool>
        <ribbon-column items="quick,select,calc" width="12"></ribbon-column>
      </ribbon-panel>
      <ribbon-panel label="Clipboard" width="40" plain>
        <ribbon-tool icon="paste" label="Paste" width="20" drop></ribbon-tool>
        <ribbon-column items="cut||v,copyClip||v" width="17"></ribbon-column>
      </ribbon-panel>
    `);
  }
}

const slanted = `
  a { position: relative; display: flex; align-items: center; gap: 4px; padding: 0 5px; }
  a::before { content: ""; position: absolute; inset: 0; border-right: 1px solid #3b4453; transform: skewX(-18deg); z-index: -1; }
  .active { color: #fff; font-weight: 600; }
  .active::before { background: #3b4453; }
  button { margin-left: 6px; }
`;

class DocTabs extends HTMLElement {
  constructor() {
    super();
    render(this, `
      :host { display: flex; height: 15px; padding: 1px 0 0 6px; background: #222831; border-bottom: 2px solid #3d434c; isolation: isolate; }
      ${slanted}
    `, `<a href="#">Start</a><a class="active" href="#">Drawing1*${icon('close', 4)}</a><button aria-label="New tab">${icon('plus', 6)}</button>`);
  }
}

class LayoutTabs extends HTMLElement {
  constructor() {
    super();
    render(this, `
      :host { display: flex; gap: 1px; height: 15px; padding: 0 0 1px 6px; background: var(--dark); border-top: 1px solid #4a505a; isolation: isolate; }
      ${slanted}
    `, `<a class="active" href="#">Model</a><a href="#">Layout1</a><a href="#">Layout2</a><button aria-label="New layout">${icon('plus', 6)}</button>`);
  }
}

// Model space. Everything slotted in floats above the drawing
class DrawingArea extends HTMLElement {
  constructor() {
    super();
    render(this, `
      :host { display: block; position: relative; min-height: 0; background: #000; }
      .model { display: block; width: 100%; height: 100%; fill: none; stroke: #6c6c6c; stroke-width: .7; }
      .view, .nav { position: absolute; display: flex; }
      .view { top: 3px; right: 3px; gap: 4px; color: #dcdcdc; }
      .nav { top: 12px; right: 1px; width: 13px; height: 107px; flex-direction: column; align-items: center; justify-content: space-evenly; background: #3d3d3d; color: #2c2c2c; }
    `, `
      <svg class="model" viewBox="0 80 1380 450" preserveAspectRatio="none" role="img" aria-label="Railway site plan">
        ${this.plan()}
        <g stroke="#c4c4c4" stroke-width="1">
          <path d="M1092.5 257v32M1092.5 294v32M1058 291.5h32M1095 291.5h32M1091 290h3v3h-3z"/>
          <path d="M11.5 496v23M11.5 518.5H33M9.5 516.5h4v4h-4z"/>
        </g>
        <g fill="#c4c4c4" stroke="none" font-size="9"><text x="12" y="495">Y</text><text x="35" y="518">X</text></g>
      </svg>
      <div class="view">${icon('minimize', 6)}${icon('restore', 6)}${icon('close', 6)}</div>
      <div class="nav">${icon('polar', 9)}${icon('menu', 9)}${icon('close', 9)}${icon('move', 9)}${icon('screen', 9)}</div>
      <slot></slot>
    `);
  }

  plan() {
    // sidings of the yard fan in to one point on the right
    let yard = '';
    for (let i = 0; i < 12; i++) {
      const y = 347 + i * 2.5;
      const top = 327 + i * 2.9;
      yard += `<path d="M1069 ${y}L1190 ${y - 9 + i * 0.2}Q1290 ${top - 3} 1320 ${top + 6 - i * 0.3}T1380 ${356 + i * 0.3}"/>`;
    }

    // catenary poles on both sides of the main line
    const poles = [[385, 457], [381, 457], [386, 463], [421, 452], [423, 459], [458, 449], [467, 448], [459, 455],
      [494, 445], [495, 452], [532, 448], [550, 446], [564, 445], [594, 442], [626, 438], [663, 435], [699, 431],
      [736, 427], [773, 424], [808, 420], [845, 417], [883, 413], [914, 410], [949, 406], [986, 402], [1023, 399],
      [1059, 395], [1096, 391], [1132, 388], [1170, 384], [1200, 381], [1233, 378], [1262, 368], [1271, 367],
      [1295, 365], [1324, 363], [1346, 363], [1370, 363], [830, 368], [857, 378], [877, 379], [893, 376], [998, 358],
      [981, 383], [1000, 382], [1018, 381], [1055, 378], [1073, 376], [1091, 375], [1127, 372], [1146, 370],
      [1164, 369], [1200, 366], [1219, 365], [1237, 364], [1271, 361], [1286, 360], [1298, 360], [1322, 359]]
      .map(([x, y]) => `M${x - 1.5} ${y}h3`).join('');

    return `
      <g stroke="#7a7a7a"><path d="M422 502 1380 436M1130 400l250 15.5"/></g>
      <g stroke="#404040">${yard}
        <path d="M1069 347v30M1181 335l51-5M1262 328q40-3 60 3t58 23"/>
        <path d="M1305 310q25 9 45 21t30 15M1305 315q15 5 40 19t35 18M1325 321q30 18 55 27"/>
      </g>
      <g stroke="#6c6c6c">
        <path d="M513 446 620 435 720 423 860 408 1005 394 1130 382 1243 371v-5"/>
        <path d="M530 442 640 431 740 419 860 404 960 396 1120 380 1243 369"/>
        <path d="M725 419 860 403M906 381q12 1 20 4t20 3l123-11 130-10 181-8M926 387l18 2"/>
      </g>
      <g stroke="#565656">
        <path d="M520 435q60-4 85-8t30-10l38-16 30-18M520 438q60-3 90-10t45-27"/>
        <path d="M531 440 600 430q30-8 50-15t40-14q30-10 48-20t50-12l37-4"/>
        <path d="M535 441 610 431q50-10 68-18t60-28q30-8 75-10l15-3"/>
        <path d="M627 408 665 396 703 383M611 421l40-18M610 430 648 407q20-11 41-10M655 412l34-14"/>
        <path d="M648 414l8-3 1 5-9 2zM660 409l4 6M680 415q20-3 29-14t25-18M702 417l18-3"/>
        <path d="M531 439l20-2M531 441l30-3M650 428l12-1M680 424l20-2"/>
      </g>
      <g stroke="#8a8a8a"><path d="M711 396 719 420M713 397q3 18 12 24M710 392l4 10M716 404l8 2M960 395h10M1115 379h6"/></g>
      <path stroke="#747474" d="${poles}"/>`;
  }
}

// Narrow upright title bar that docks at the side of a palette
class PaletteBar extends HTMLElement {
  constructor() {
    super();
    render(this, `
      :host { display: flex; flex-direction: column; align-items: center; gap: 4px; width: 11px; padding: 3px 0 2px; background: #2a313c; }
      button { color: #fff; }
      h2 { flex: 1; margin: 0; font: inherit; color: #c6ccd6; writing-mode: vertical-rl; transform: rotate(180deg); white-space: nowrap; }
    `, `
      <button aria-label="Close">${icon('close', 5)}</button>
      <button aria-label="Auto-hide">${icon('pin', 5)}</button>
      <button aria-label="Menu">${icon('menu', 5)}</button>
      <h2><slot></slot></h2>
      ${icon(this.getAttribute('icon'), 7)}
    `);
  }
}

class PropertyGroup extends HTMLElement {
  constructor() {
    super();
    render(this, `
      :host { display: contents; }
      h3 { display: flex; flex: 1; align-items: center; justify-content: space-between; margin: 1px 0 0; padding: 0 3px 0 2px; font: inherit; font-weight: 700; color: #fff; background: #2b323e; }
    `, `<h3>${this.getAttribute('label')}${caret}</h3><slot></slot>`);
  }
}

class PropertyRow extends HTMLElement {
  constructor() {
    super();
    const sample = this.getAttribute('sample');
    render(this, `
      :host { display: grid; flex: 1; grid-template-columns: 47px 1fr; align-items: center; margin-left: 10px; border-bottom: 1px solid #353d4a; white-space: nowrap; }
      span { display: flex; align-items: center; gap: 2px; height: 7px; color: #fff; padding-left: 1px; border-left: 1px solid #353d4a; }
      .square { width: 7px; height: 6px; margin-right: 1px; background: #fff; }
      .line { width: 30px; height: 1px; background: #e8ebf0; }
      :host([muted]) span { color: #929bab; }
    `, `${this.getAttribute('label')}<span>${sample ? `<i class="${sample}"></i>` : ''}<slot></slot></span>`);
  }
}

class PropertiesPalette extends HTMLElement {
  constructor() {
    super();
    const groups = {
      'General': [['Color', 'ByLayer', 'sample="square"'], ['Layer', '0'], ['Linetype', 'ByLayer', 'sample="line"'],
        ['Linetype scale', '1'], ['Lineweight', 'ByLayer', 'sample="line"'], ['Transparency', 'ByLayer'], ['Thickness', '0']],
      '3D Visualization': [['Material', 'ByLayer']],
      'Plot style': [['Plot style', 'ByColor', 'muted'], ['Plot style table', 'None'],
        ['Plot table attach...', 'Model', 'muted'], ['Plot table type', 'Not available', 'muted']],
      'View': [['Center X', '249896.685', 'muted'], ['Center Y', '43189.4897', 'muted'], ['Center Z', '0', 'muted'],
        ['Height', '687.2125', 'muted'], ['Width', '2108.3214', 'muted']],
      'Misc': [['Annotation scale', '1:1'], ['UCS icon On', 'Yes'], ['UCS icon at origin', 'Yes'],
        ['UCS per viewport', 'Yes'], ['UCS Name', ''], ['Visual Style', '2D Wireframe']]
    };
    const list = Object.entries(groups).map(([name, rows]) => `
      <property-group label="${name}">
        ${rows.map(([label, value, extra]) => `<property-row label="${label}" ${extra || ''}>${value}</property-row>`).join('')}
      </property-group>`).join('');
    render(this, `
      :host { position: absolute; left: 1px; top: 0; display: flex; height: 276px; }
      .body { display: flex; flex-direction: column; width: 147px; padding: 8px 7px 7px 8px; background: var(--panel); }
      .top { display: flex; align-items: center; gap: 3px; margin-bottom: 3px; }
      .top sample-select { width: 100px; margin-right: 1px; }
      .list { display: flex; flex: 1; flex-direction: column; min-height: 0; }
      nav { display: flex; flex-direction: column; width: 9px; height: 218px; margin-top: 1px; background: #2e3643; }
      nav a { display: flex; flex: 1; align-items: center; justify-content: center; writing-mode: vertical-rl; transform: rotate(180deg); border-top: 1px solid #222933; color: #c6ccd6; }
      nav a:first-child { background: var(--panel); color: #fff; }
    `, `
      <palette-bar icon="calc">PROPERTIES</palette-bar>
      <div class="body">
        <div class="top"><sample-select label="Selection" value="No selection"></sample-select>${icon('quickSelect')}${icon('select')}${icon('quick')}</div>
        <div class="list">${list}</div>
      </div>
      <nav><a href="#">Design</a><a href="#">Display</a><a href="#">Extended Data</a><a href="#">Object Class</a></nav>
    `);
  }
}

class ReferencesPalette extends HTMLElement {
  constructor() {
    super();
    render(this, `
      :host { position: absolute; left: 168px; top: 0; display: flex; height: 242px; }
    `, '<palette-bar icon="references">EXTERNAL REFERENCES</palette-bar>');
  }
}

// Tree of layer filters with its own horizontal scroll strip
class LayerFilters extends HTMLElement {
  constructor() {
    super();
    render(this, `
      :host { display: flex; flex-direction: column; width: 68px; min-width: 0; }
      header, footer, label, li, .scroll { display: flex; align-items: center; }
      header, footer { justify-content: space-between; flex: none; height: 11px; padding: 0 1px; color: #eef0f4; }
      ul { flex: 1; margin: 0; padding: 2px 0 0; list-style: none; overflow: hidden; }
      li { position: relative; height: 8px; gap: 3px; padding-left: 2px; white-space: nowrap; color: #eef0f4; }
      .two { padding-left: 17px; }
      .sub { padding-left: 11px; }
      .three { padding-left: 25px; }
      .two::before, .three::before { content: ""; position: absolute; left: 12px; top: -4px; width: 4px; height: 8px; border: solid #8791a1; border-width: 0 0 1px 1px; }
      .three::before { left: 20px; }
      .selected span { background: #6f87ab; }
      .mark::after { content: ""; position: absolute; left: 6px; top: -1px; width: 59px; height: 11px; border: 2px solid var(--accent); }
      .scroll { justify-content: space-between; height: 8px; background: #f0f0f0; color: #333; }
      .scroll i { width: 31px; height: 6px; margin-right: 22px; background: #cdcdcd; }
      label { gap: 3px; }
      input { appearance: none; width: 5px; height: 5px; background: #fff; }
    `, `
      <header>Filters${icon('chevrons', 6)}</header>
      <ul>
        <li>${icon('minus', 5)}${icon('copyClip', 6)}<span>All</span></li>
        <li class="two">${icon('filter', 7)}<span>All non-Xref Laye</span></li>
        <li class="two">${icon('filter', 7)}<span>All Used Layers</span></li>
        <li class="sub">${icon('minus', 5)}${icon('status', 6)}<span>Xref</span></li>
        <li class="three selected">${icon('xrefFile', 7)}<span>L162-193-300</span></li>
        <li class="two mark">${icon('status', 7)}<span>Xref Overrides</span></li>
      </ul>
      <div class="scroll">${icon('left', 5)}<i></i>${icon('right', 5)}</div>
      <footer><label><input type="checkbox">Invert filter</label>${icon('chevrons', 6)}</footer>
    `);
  }
}

class LayerTable extends HTMLElement {
  constructor() {
    super();
    const prefix = 'L162-193-300-DE-export Infinity|FP_';
    const layers = ['180L_TalusBas_T...', '181L_TalusHt_Ta...', '185P_NiveauDI...', '217L_ClotFil_AN...', '238L_Barriere_S...',
      '270L_Soutnmnt...', '272L_Soutnmnt...', '276L_DalleBeto...', '333L_CheminBo...', '337L_Parapet_B...',
      '360L_BordurBs_...', '362L_BordurHt_...', '506P_PotLum_V...', '653L_DivTaque_...', '654P_DivTaque_...',
      '700L_LimRegio_...', '800L_VoiNoElec...', '801L_VoieAxe', '803P_Voie ferré...', '804P_PotArk_V...',
      '805P_SignalPot...', '807P_PotKilome...', '808P_PotCatEn...', '809P_PotCatCa...'];
    const names = ['Construction', ...layers.map((n) => `STA_2024.02.21_${n}`)];
    const rows = names.map((name, i) => {
      const thick = name.endsWith('VoieAxe');
      return `<tr>
        <td>${icon('status', 5)}</td><td class="name">${prefix}${name}</td>
        <td class="icon">${icon('bulb', 7)}</td><td class="icon">${icon('sun', 7)}</td><td class="icon">${icon('unlock', 7)}</td>
        <td class="icon plot">${icon(i ? 'plot' : 'noplot', 7)}</td>
        <td><span class="color"></span>8</td><td>Continu...</td>
        <td><span class="${thick ? 'thick' : 'thin'}"></span>${thick ? '1.06...' : 'Defa...'}</td>
        <td>0</td><td>${icon('freezeNew', 5)}</td><td>${prefix}...</td><td></td>
      </tr>`;
    }).join('');
    const widths = [8, 174, 20, 23, 20, 16, 28, 29, 31, 24, 9, 97];
    render(this, `
      :host { display: flex; min-width: 0; position: relative; }
      table { flex: 1; height: 214px; table-layout: fixed; border-collapse: collapse; line-height: 6px; background: #7388a8; }
      td, th { padding: 0 0 0 1px; overflow: hidden; white-space: nowrap; text-align: left; font-weight: 400; vertical-align: middle; }
      th { height: 11px; color: #eef0f4; background: var(--panel); border-right: 1px solid #333b48; }
      td { color: #fff; }
      td.name { color: #ccd5e2; border-right: 1px solid #2f3947; }
      th:nth-child(n+4):nth-child(-n+7), .icon { padding: 0; text-align: center; }
      td.plot { text-align: right; }
      th.sorted cad-icon { float: right; margin: 1px; }
      td cad-icon { vertical-align: middle; }
      span { display: inline-block; vertical-align: middle; margin-right: 2px; }
      .color { width: 6px; height: 6px; margin-left: 6px; border: 1px solid #c9c9c9; background: #77787c; }
      .thin { width: 10px; height: 1px; background: #dfe5ee; }
      .thick { width: 10px; height: 4px; background: #fff; }
      .scroll { display: flex; flex-direction: column; align-items: center; width: 8px; margin-top: 1px; background: #f0f0f0; color: #333; }
      .scroll i { width: 6px; height: 85px; margin-bottom: auto; background: #cdcdcd; }
      .mark { position: absolute; left: 260px; top: -6px; width: 29px; height: 226px; border: 2px solid var(--accent); }
    `, `
      <table>
        <colgroup>${widths.map((w) => `<col style="width:${w}px">`).join('')}<col></colgroup>
        <thead><tr><th>S.</th><th class="sorted">Name${icon('sort', 4)}</th><th>On</th><th>Freeze</th><th>Lock</th><th>Plot</th><th>Color</th>
          <th>Linetype</th><th>Lineweight</th><th>Transp...</th><th>N.</th><th>Description</th><th></th></tr></thead>
        <tbody>${rows}</tbody>
      </table>
      <div class="scroll">${icon('up', 5)}<i></i>${icon('down', 5)}</div>
      <div class="mark"></div>
    `);
  }
}

class LayerManager extends HTMLElement {
  constructor() {
    super();
    const tools = ['sheetGray', 'saveas', 'swap', 'cut', 'calc', '', 'filter', 'folder', 'file', '', 'copyClip', '', '',
      'sheetYellow', 'sheetWarn', 'sheetGreen', 'sheetRed', 'sheetGray'];
    render(this, `
      :host { position: absolute; left: 220px; top: 0; display: flex; height: 254px; }
      .body { display: flex; flex-direction: column; width: 715px; padding: 1px 2px 0 1px; background: var(--panel); }
      .top, .tools, .search { display: flex; align-items: center; justify-content: space-between; }
      .top { height: 12px; }
      .top p { margin: 4px 0 0 12px; color: #eef0f4; }
      .search { width: 56px; height: 8px; padding-right: 1px; background: var(--field); }
      input { width: 46px; padding: 0 1px; }
      input::placeholder { color: #c4cbd6; opacity: 1; }
      .tools { height: 10px; }
      .tools div { display: flex; align-items: center; gap: 3px; }
      .tools i { width: 4px; }
      .main { display: flex; gap: 2px; }
      .main layer-table { flex: 1; }
      .foot { margin: 8px 0 0; color: #eef0f4; }
    `, `
      <palette-bar icon="sheetGray">LAYER PROPERTIES MANAGER</palette-bar>
      <div class="body">
        <div class="top">
          <p>Current layer: 0 : 0</p>
          <div class="search"><input aria-label="Search for layer" placeholder="Search for layer">${icon('search', 6)}</div>
        </div>
        <div class="tools">
          <div>${tools.map((n) => (n ? `<button aria-label="${n}">${icon(n, 7)}</button>` : '<i></i>')).join('')}</div>
          <div>${icon('refresh')}${icon('cut', 7)}${icon('gear', 7)}<i></i></div>
        </div>
        <div class="main"><layer-filters></layer-filters><layer-table></layer-table></div>
        <p class="foot">L162-193-300-DE-export Infinity: 59 layers displayed of 60 total layers</p>
      </div>
    `);
  }
}

class CommandLine extends HTMLElement {
  constructor() {
    super();
    render(this, `
      :host { position: absolute; left: 463px; bottom: 0; width: 456px; font-family: "Liberation Mono", monospace; }
      .history { display: flex; flex-direction: column; align-items: flex-start; gap: 2px; margin: 0 0 1px 28px; }
      .history span { padding: 0 1px; background: #484848; color: #b5b5b5; }
      .row { display: flex; height: 12px; }
      .grip { display: flex; align-items: center; gap: 4px; width: 25px; background: #252b35; color: #dfe3ea; }
      .grip i { width: 3px; height: 8px; background: #6b7280; }
      .entry { display: flex; flex: 1; align-items: center; gap: 2px; padding: 0 2px; background: #b4b4b4; color: #333; }
      input { flex: 1; }
      input::placeholder { color: #444; font-style: italic; opacity: 1; }
    `, `
      <div class="history"><span>_LAYER</span><span>Command:</span><span>Command:</span></div>
      <div class="row">
        <div class="grip"><i></i>${icon('close', 5)}${icon('wrench', 7)}</div>
        <div class="entry">${icon('prompt')}${icon('caret', 3)}<input aria-label="Command" placeholder="Type a command">${icon('sort', 4)}</div>
      </div>
    `);
  }
}

class StatusBar extends HTMLElement {
  constructor() {
    super();
    const v = '<button class="drop" aria-label="Options">' + icon('caret', 4) + '</button>';
    const b = (name, cls = '') => `<button class="${cls}" aria-label="${name}">${icon(name)}</button>`;
    render(this, `
      :host { display: flex; justify-content: flex-end; height: 13px; padding-bottom: 1px; background: var(--panel); }
      div { display: flex; align-items: center; justify-content: space-between; width: 338px; background: #2f3744; }
      button { min-width: 10px; height: 11px; background: #39424f; color: #dfe3ea; }
      .drop { min-width: 5px; }
      .on { background: #5b93cc; color: #fff; }
      .label { color: #fff; }
      .space { min-width: 22px; }
    `, `
      <div><button class="label space">MODEL</button>${b('grid')}${b('dots')}${v}${b('ortho')}${b('polar')}${v}${b('iso')}${v}${b('angle')}${b('osnap')}${v}
      ${b('scaleA', 'on')}${b('scaleB')}${b('scaleA')}<button class="label">1:1_1</button>${v}${b('gear')}${v}${b('plus')}${b('nodes')}${b('globe')}
      <button class="label">1:4</button>${b('isolate')}${v}${b('tag', 'on')}${b('sheetWarn')}${b('sheetWarn')}${b('trim3')}${b('screen')}${b('burger')}</div>
    `);
  }
}

class TaskBar extends HTMLElement {
  constructor() {
    super();
    const apps = ['taskview', 'deer', 'edge', 'chrome', 'explorer', 'outlook', 'notepad', 'rtool', 'excel', 'vault', 'revit',
      'inventor', 'civil', 'acad', 'nav', 'teams', 'bird', 'sap', 'birdGreen'];
    render(this, `
      :host { display: flex; align-items: stretch; height: 16px; background: #061826; color: #fff; }
      .start { width: 21px; }
      .search { display: flex; align-items: center; gap: 5px; width: 130px; padding-left: 6px; background: #2d4656; color: #e6ecf0; }
      input { flex: 1; min-width: 0; font-size: 6px; }
      input::placeholder { color: inherit; opacity: 1; }
      .apps { display: flex; width: 424px; }
      .apps button { flex: 1; }
      .civil { background: #134a7a; }
      .outlook, .chrome, .teams, .sap, .birdGreen, .vault { border-bottom: 1px solid #2c5f88; }
      .tray { display: flex; align-items: center; gap: 3px; margin-left: auto; padding-right: 7px; }
      .tray p { margin: 0; text-align: center; }
      .tray .lang { margin: 0 3px; }
      .tray button { margin-left: 5px; }
    `, `
      <button class="start" aria-label="Start">${icon('windows')}</button>
      <div class="search">${icon('find')}<input aria-label="Search" placeholder="Type here to search"></div>
      <div class="apps">${apps.map((n) => `<button class="${n}" aria-label="${n}">${icon(n, 10)}</button>`).join('')}</div>
      <div class="tray">${icon('chevron', 7)}${icon('cloud')}${icon('battery')}${icon('monitor')}${icon('volume')}
        <p class="lang">ENG<br>UK</p><p>14:50<br>26/02/2024</p><button aria-label="Notifications">${icon('notify', 11)}</button></div>
    `);
  }
}

customElements.define('cad-icon', CadIcon);
customElements.define('ribbon-panel', RibbonPanel);
customElements.define('ribbon-tool', RibbonTool);
customElements.define('ribbon-column', RibbonColumn);
customElements.define('sample-select', SampleSelect);
customElements.define('palette-bar', PaletteBar);
customElements.define('property-group', PropertyGroup);
customElements.define('property-row', PropertyRow);
customElements.define('layer-filters', LayerFilters);
customElements.define('layer-table', LayerTable);
customElements.define('title-bar', TitleBar);
customElements.define('ribbon-tabs', RibbonTabs);
customElements.define('ribbon-bar', RibbonBar);
customElements.define('doc-tabs', DocTabs);
customElements.define('drawing-area', DrawingArea);
customElements.define('properties-palette', PropertiesPalette);
customElements.define('references-palette', ReferencesPalette);
customElements.define('layer-manager', LayerManager);
customElements.define('command-line', CommandLine);
customElements.define('layout-tabs', LayoutTabs);
customElements.define('status-bar', StatusBar);
customElements.define('task-bar', TaskBar);
</script>
</body>
</html>
